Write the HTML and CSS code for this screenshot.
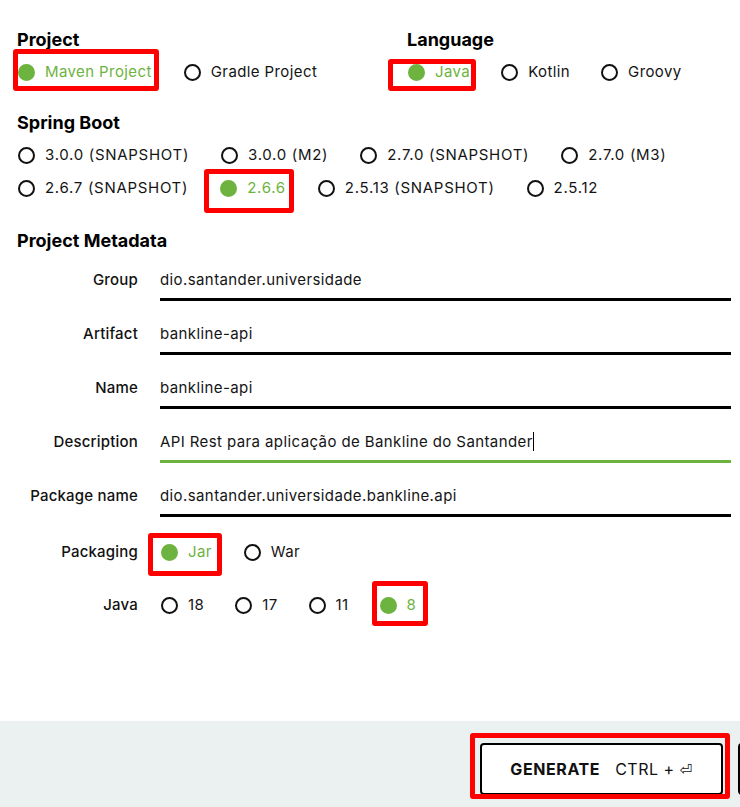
FILE: index.html
```html
<!DOCTYPE html>
<html lang="en">
<head>
<meta charset="utf-8">
<title>Spring Initializr</title>
<link rel="stylesheet" href="styles.css">
</head>
<body>
<main class="page">
  <div class="top">
    <section class="group group-project">
      <h2 class="heading">Project</h2>
      <div class="radios">
        <span class="radio checked mark mark-maven"><i class="dot"></i>Maven Project</span>
        <span class="radio"><i class="dot"></i>Gradle Project</span>
      </div>
    </section>
    <section class="group group-project">
      <h2 class="heading">Language</h2>
      <div class="radios">
        <span class="radio checked mark mark-java"><i class="dot"></i>Java</span>
        <span class="radio"><i class="dot"></i>Kotlin</span>
        <span class="radio"><i class="dot"></i>Groovy</span>
      </div>
    </section>
  </div>

  <section class="group group-boot">
    <h2 class="heading">Spring Boot</h2>
    <div class="radios">
      <span class="radio"><i class="dot"></i>3.0.0 (SNAPSHOT)</span>
      <span class="radio"><i class="dot"></i>3.0.0 (M2)</span>
      <span class="radio"><i class="dot"></i>2.7.0 (SNAPSHOT)</span>
      <span class="radio"><i class="dot"></i>2.7.0 (M3)</span>
    </div>
    <div class="radios">
      <span class="radio"><i class="dot"></i>2.6.7 (SNAPSHOT)</span>
      <span class="radio checked mark mark-boot"><i class="dot"></i>2.6.6</span>
      <span class="radio"><i class="dot"></i>2.5.13 (SNAPSHOT)</span>
      <span class="radio"><i class="dot"></i>2.5.12</span>
    </div>
  </section>

  <section class="group group-meta">
    <h2 class="heading">Project Metadata</h2>
    <div class="row row-field">
      <span class="label">Group</span>
      <div class="field">dio.santander.universidade</div>
    </div>
    <div class="row row-field">
      <span class="label">Artifact</span>
      <div class="field">bankline-api</div>
    </div>
    <div class="row row-field">
      <span class="label">Name</span>
      <div class="field">bankline-api</div>
    </div>
    <div class="row row-field">
      <span class="label">Description</span>
      <div class="field field-focus">API Rest para aplicação de Bankline do Santander<span class="caret"></span></div>
    </div>
    <div class="row row-field row-last">
      <span class="label">Package name</span>
      <div class="field">dio.santander.universidade.bankline.api</div>
    </div>
    <div class="row row-radio">
      <span class="label">Packaging</span>
      <div class="radios">
        <span class="radio checked mark mark-jar"><i class="dot"></i>Jar</span>
        <span class="radio"><i class="dot"></i>War</span>
      </div>
    </div>
    <div class="row row-radio">
      <span class="label">Java</span>
      <div class="radios radios-java">
        <span class="radio"><i class="dot"></i>18</span>
        <span class="radio"><i class="dot"></i>17</span>
        <span class="radio"><i class="dot"></i>11</span>
        <span class="radio checked mark mark-eight"><i class="dot"></i>8</span>
      </div>
    </div>
  </section>
</main>

<footer class="footer">
  <button class="btn mark mark-gen" type="button"><strong>GENERATE</strong><span class="kbd">CTRL + <span class="ret">⏎</span></span></button>
  <span class="btn btn-next" aria-hidden="true"></span>
</footer>
</body>
</html>
```

FILE: styles.css
```css
* {
  box-sizing: border-box;
}

html, body {
  margin: 0;
  padding: 0;
  height: 807px;
  overflow: hidden;
  background: #ffffff;
}

body {
  font-family: Inter, "Noto Sans", "Liberation Sans", sans-serif;
  font-size: 15px;
  letter-spacing: 0.4px;
  color: #141414;
}

.page {
  padding: 30px 9px 0 17px;
  height: 721px;
}

.top {
  display: grid;
  grid-template-columns: 390px 1fr;
}

.heading {
  margin: 0 0 12px 0;
  font-size: 18px;
  line-height: 20px;
  font-weight: 700;
  letter-spacing: 0;
  color: #000;
}

.group-project {
  margin-bottom: 31px;
}

.group-project .radios + .radios {
  margin-top: 0;
}

.group-project:last-child .radios {
  gap: 31px;
}

.group-boot {
  margin-bottom: 33px;
}

.group-boot .radio {
  letter-spacing: 0.7px;
}

.group-boot .radios + .radios {
  margin-top: 13px;
}

.radios {
  display: flex;
  gap: 32px;
  padding-left: 1px;
  white-space: nowrap;
}

.radios-java {
  gap: 31px;
}

.radio {
  display: inline-flex;
  align-items: center;
  height: 20px;
  line-height: 20px;
  color: #141414;
}

.dot {
  display: inline-block;
  width: 17px;
  height: 17px;
  border: 2px solid #111;
  border-radius: 50%;
  margin-right: 10px;
  flex: none;
}

.radio.checked {
  color: #6db33f;
}

.radio.checked .dot {
  background: #6db33f;
  border-color: #6db33f;
}

.group-meta .heading {
  margin-bottom: 19px;
}

.row {
  display: grid;
  grid-template-columns: 121px 571px;
  column-gap: 22px;
}

.label {
  text-align: right;
  line-height: 20px;
  font-weight: 500;
  letter-spacing: 0.2px;
  color: #111;
}

.row-field {
  margin-bottom: 23px;
}

.row-field.row-last {
  margin-bottom: 25px;
}

.field {
  line-height: 20px;
  padding-bottom: 8px;
  border-bottom: 3px solid #000;
  color: #141414;
}

.field-focus {
  border-bottom-color: #6db33f;
}

.caret {
  display: inline-block;
  width: 1px;
  height: 19px;
  background: #000;
  vertical-align: -4px;
}

.row-radio {
  margin-bottom: 33px;
}

/* red annotation frames drawn over the content */
.mark {
  position: relative;
}

.mark::after {
  content: "";
  position: absolute;
  border: 5px solid #ff0000;
  border-radius: 3px;
  pointer-events: none;
}

.mark-maven::after { left: -5px; right: -7px; top: -13px; bottom: -9px; }
.mark-java::after { left: -20px; right: -6px; top: -3px; bottom: -9px; }
.mark-boot::after { left: -16px; right: -8px; top: -9px; bottom: -15px; }
.mark-jar::after { left: -13px; right: -10px; top: -9px; bottom: -14px; }
.mark-eight::after { left: -8px; right: -12px; top: -14px; bottom: -11px; }
.mark-gen::after { left: -12px; right: -9px; top: -12px; bottom: -6px; }

.footer {
  height: 86px;
  background: #ebf0f1;
  padding: 22px 0 0 480px;
  display: flex;
  gap: 15px;
  overflow: hidden;
  white-space: nowrap;
}

.btn {
  flex: none;
  width: 243px;
  height: 52px;
  display: inline-flex;
  align-items: center;
  justify-content: center;
  gap: 15px;
  padding: 0;
  background: #fff;
  border: 2px solid #000;
  border-radius: 4px;
  font-family: inherit;
  font-size: 16px;
  color: #111;
}

.btn strong {
  font-weight: 700;
  letter-spacing: 0.6px;
}

.kbd {
  font-weight: 400;
  letter-spacing: 0.5px;
}

.ret {
  font-family: "DejaVu Sans", sans-serif;
  font-size: 15px;
}
```
